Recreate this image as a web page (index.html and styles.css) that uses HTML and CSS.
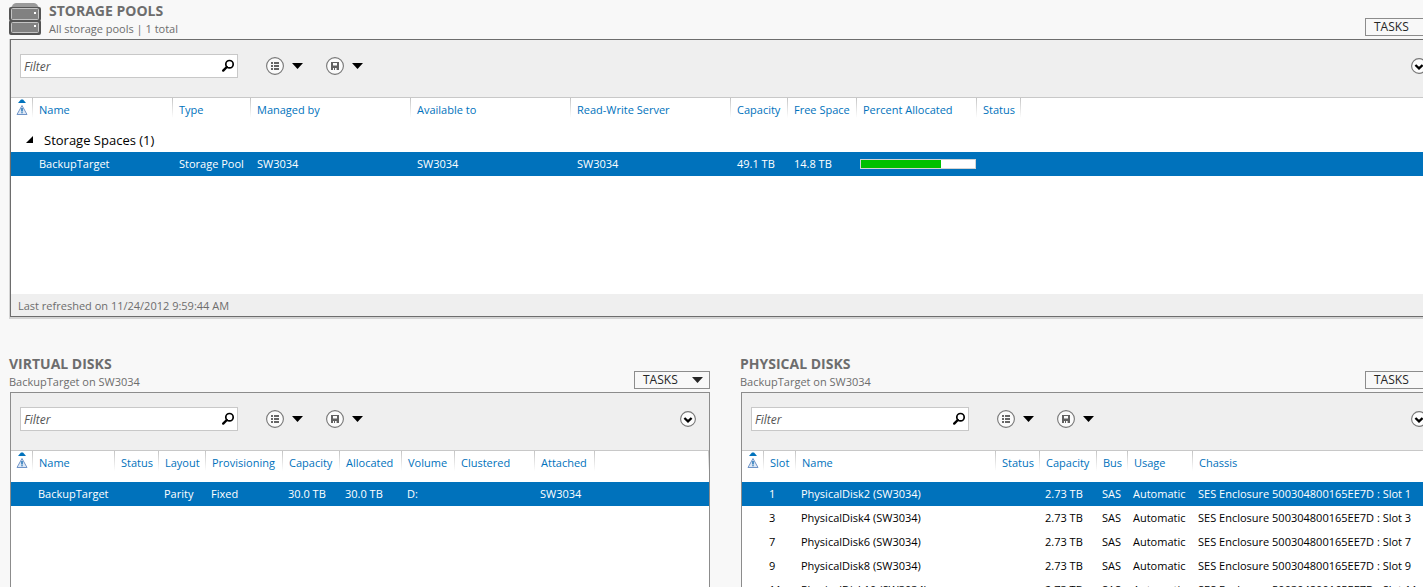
FILE: index.html
```html
<!DOCTYPE html>
<html lang="en">
<head>
  <meta charset="UTF-8" />
  <meta name="viewport" content="width=device-width, initial-scale=1.0"/>
  <title>Storage Pools</title>
  <link rel="stylesheet" href="styles.css">
</head>
<body>
  <!-- Shared icons -->
  <svg class="sprite" aria-hidden="true">
    <symbol id="i-search" viewBox="0 0 14 14">
      <circle cx="8.5" cy="5.2" r="3.7" fill="#fff" stroke="#000" stroke-width="1.7"/>
      <path d="M5.8 8L2.2 11.6" stroke="#000" stroke-width="2.4" stroke-linecap="round"/>
    </symbol>
    <symbol id="i-list" viewBox="0 0 18 18">
      <circle cx="9" cy="9" r="8.4" fill="#fbfbfb" stroke="#777" stroke-width="1.1"/>
      <path d="M5 6h2M5 9h2M5 12h2M8 6h5M8 9h5M8 12h5" stroke="#666" stroke-width="2"/>
    </symbol>
    <symbol id="i-save" viewBox="0 0 18 18">
      <circle cx="9" cy="9" r="8.4" fill="#fbfbfb" stroke="#777" stroke-width="1.1"/>
      <path d="M5 5h8v8H5z" fill="#606060"/>
      <path d="M7 6h4v2.4H7zM7 11h1v2H7zM9 11h1.6v2H9z" fill="#fbfbfb"/>
    </symbol>
    <symbol id="i-caret" viewBox="0 0 11 6">
      <path d="M0 0h11L5.5 6z" fill="currentColor"/>
    </symbol>
    <symbol id="i-chevron" viewBox="0 0 16 16">
      <circle cx="8" cy="8" r="7.4" fill="#fdfdfd" stroke="#777" stroke-width="1.1"/>
      <path d="M4.4 7L8 10.4L11.6 7" fill="none" stroke="#000" stroke-width="2.3"/>
    </symbol>
    <symbol id="i-warn" viewBox="0 0 12 18">
      <path d="M2 5L5 1.5h2L10 5z" fill="#0072bc"/>
      <path d="M6 7.5L11 16.5H1z" fill="#dfe8f5" stroke="#6f94c8" stroke-width="1"/>
      <path d="M6 10v3.5M6 14.3v1" stroke="#0061ad" stroke-width="1.3"/>
    </symbol>
  </svg>

  <main class="page">
    <section class="pools">
      <header class="head">
        <svg class="logo" viewBox="0 0 32 33" aria-hidden="true">
          <path d="M1 6L4 1.5Q5 0 7 0H25Q27 0 28 1.5L31 6z" fill="#9a9a9a"/>
          <rect x="0" y="4" width="32" height="14" rx="2" fill="#555"/>
          <rect x="0" y="17" width="32" height="15" rx="2" fill="#555"/>
          <rect x="2.5" y="5.5" width="27" height="11" rx="1" fill="#818181" stroke="#c4c4c4"/>
          <rect x="2.5" y="19.5" width="27" height="10" rx="1" fill="#818181" stroke="#c4c4c4"/>
          <rect x="25" y="9" width="2" height="2" fill="#fff"/>
          <rect x="25" y="22" width="2" height="2" fill="#fff"/>
        </svg>
        <div class="titles">
          <h2>STORAGE POOLS</h2>
          <p>All storage pools | 1 total</p>
        </div>
        <button class="tasks">TASKS <svg class="caret"><use href="#i-caret"/></svg></button>
      </header>
      <div class="panel panel-main">
        <div class="toolbar">
          <div class="filter">
            <input type="text" placeholder="Filter" aria-label="Filter storage pools">
            <button aria-label="Search"><svg class="search"><use href="#i-search"/></svg></button>
          </div>
          <button class="tool" aria-label="Queries"><svg class="round"><use href="#i-list"/></svg><svg class="caret"><use href="#i-caret"/></svg></button>
          <button class="tool" aria-label="Save query"><svg class="round"><use href="#i-save"/></svg><svg class="caret"><use href="#i-caret"/></svg></button>
          <button class="expand" aria-label="Expand"><svg><use href="#i-chevron"/></svg></button>
        </div>
        <div class="list">
          <table>
            <colgroup>
              <col class="w22"><col class="w140"><col class="w78"><col class="w160"><col class="w160"><col class="w160"><col class="w57"><col class="w69"><col class="w120"><col class="w44"><col>
            </colgroup>
            <thead>
              <tr>
                <th class="warn"><svg><use href="#i-warn"/></svg></th>
                <th>Name</th><th>Type</th><th>Managed by</th><th>Available to</th><th>Read-Write Server</th><th>Capacity</th><th>Free Space</th><th>Percent Allocated</th><th>Status</th><th class="rest"></th>
              </tr>
            </thead>
            <tbody>
              <tr class="group">
                <td colspan="11"><button><svg viewBox="0 0 7 7"><path d="M7 0v7H0z"/></svg>Storage Spaces (1)</button></td>
              </tr>
              <tr class="selected">
                <td></td><td>BackupTarget</td><td>Storage Pool</td><td>SW3034</td><td>SW3034</td><td>SW3034</td><td>49.1 TB</td><td>14.8 TB</td>
                <td class="meter"><div class="bar"><div class="fill" style="width: 70%"></div></div></td>
                <td></td><td></td>
              </tr>
            </tbody>
          </table>
        </div>
        <footer>Last refreshed on 11/24/2012 9:59:44 AM</footer>
      </div>
    </section>

    <div class="columns">
      <section>
        <header class="head">
          <div class="titles">
            <h2>VIRTUAL DISKS</h2>
            <p>BackupTarget on SW3034</p>
          </div>
          <button class="tasks">TASKS <svg class="caret"><use href="#i-caret"/></svg></button>
        </header>
        <div class="panel">
          <div class="toolbar">
            <div class="filter">
              <input type="text" placeholder="Filter" aria-label="Filter virtual disks">
              <button aria-label="Search"><svg class="search"><use href="#i-search"/></svg></button>
            </div>
            <button class="tool" aria-label="Queries"><svg class="round"><use href="#i-list"/></svg><svg class="caret"><use href="#i-caret"/></svg></button>
            <button class="tool" aria-label="Save query"><svg class="round"><use href="#i-save"/></svg><svg class="caret"><use href="#i-caret"/></svg></button>
            <button class="expand" aria-label="Expand"><svg><use href="#i-chevron"/></svg></button>
          </div>
          <table class="disks">
            <colgroup>
              <col class="w22"><col class="w82"><col class="w44"><col class="w47"><col class="w77"><col class="w57"><col class="w62"><col class="w53"><col class="w80"><col class="w60"><col>
            </colgroup>
            <thead>
              <tr>
                <th class="warn"><svg><use href="#i-warn"/></svg></th>
                <th>Name</th><th>Status</th><th>Layout</th><th>Provisioning</th><th>Capacity</th><th>Allocated</th><th>Volume</th><th>Clustered</th><th>Attached</th><th></th>
              </tr>
            </thead>
            <tbody>
              <tr class="selected">
                <td></td><td>BackupTarget</td><td></td><td>Parity</td><td>Fixed</td><td>30.0 TB</td><td>30.0 TB</td><td>D:</td><td></td><td>SW3034</td><td></td>
              </tr>
            </tbody>
          </table>
        </div>
      </section>

      <section>
        <header class="head">
          <div class="titles">
            <h2>PHYSICAL DISKS</h2>
            <p>BackupTarget on SW3034</p>
          </div>
          <button class="tasks">TASKS <svg class="caret"><use href="#i-caret"/></svg></button>
        </header>
        <div class="panel">
          <div class="toolbar">
            <div class="filter">
              <input type="text" placeholder="Filter" aria-label="Filter physical disks">
              <button aria-label="Search"><svg class="search"><use href="#i-search"/></svg></button>
            </div>
            <button class="tool" aria-label="Queries"><svg class="round"><use href="#i-list"/></svg><svg class="caret"><use href="#i-caret"/></svg></button>
            <button class="tool" aria-label="Save query"><svg class="round"><use href="#i-save"/></svg><svg class="caret"><use href="#i-caret"/></svg></button>
            <button class="expand" aria-label="Expand"><svg><use href="#i-chevron"/></svg></button>
          </div>
          <table class="disks">
            <colgroup>
              <col class="w22"><col class="w32"><col class="w200"><col class="w44"><col class="w57"><col class="w31"><col class="w65"><col>
            </colgroup>
            <thead>
              <tr>
                <th class="warn"><svg><use href="#i-warn"/></svg></th>
                <th>Slot</th><th>Name</th><th>Status</th><th>Capacity</th><th>Bus</th><th>Usage</th><th>Chassis</th>
              </tr>
            </thead>
            <tbody>
              <tr class="selected"><td></td><td>1</td><td>PhysicalDisk2 (SW3034)</td><td></td><td>2.73 TB</td><td>SAS</td><td>Automatic</td><td>SES Enclosure 500304800165EE7D : Slot 1</td></tr>
              <tr><td></td><td>3</td><td>PhysicalDisk4 (SW3034)</td><td></td><td>2.73 TB</td><td>SAS</td><td>Automatic</td><td>SES Enclosure 500304800165EE7D : Slot 3</td></tr>
              <tr><td></td><td>7</td><td>PhysicalDisk6 (SW3034)</td><td></td><td>2.73 TB</td><td>SAS</td><td>Automatic</td><td>SES Enclosure 500304800165EE7D : Slot 7</td></tr>
              <tr><td></td><td>9</td><td>PhysicalDisk8 (SW3034)</td><td></td><td>2.73 TB</td><td>SAS</td><td>Automatic</td><td>SES Enclosure 500304800165EE7D : Slot 9</td></tr>
              <tr><td></td><td>11</td><td>PhysicalDisk10 (SW3034)</td><td></td><td>2.73 TB</td><td>SAS</td><td>Automatic</td><td>SES Enclosure 500304800165EE7D : Slot 11</td></tr>
            </tbody>
          </table>
        </div>
      </section>
    </div>
  </main>
</body>
</html>
```
FILE: styles.css
```css
* {
  margin: 0;
  padding: 0;
  box-sizing: border-box;
}

body {
  height: 100vh;
  overflow: hidden;
  background: #f8f8f8;
  color: #000;
  font-family: 'Open Sans', sans-serif;
  font-size: 11px;
  line-height: 18px;
}

svg {
  display: block;
  flex: none;
}

button, input {
  font: inherit;
  color: inherit;
  background: none;
  border: none;
}

.sprite {
  width: 0;
  height: 0;
  position: absolute;
}

/* the page is a little wider than the window */
.page {
  display: flex;
  flex-direction: column;
  gap: 38px;
  height: 100vh;
  margin-left: 9px;
  margin-right: -18px;
  padding-top: 3px;
}

.columns {
  flex: 1;
  display: grid;
  grid-template-columns: minmax(0, 1fr) minmax(0, 1fr);
  gap: 30px;
  min-height: 0;
}

.columns section {
  display: flex;
  flex-direction: column;
  min-height: 0;
}

.columns .panel {
  flex: 1;
  min-height: 0;
  overflow: hidden;
  border-bottom: none;
}

/* Section heading */
.head {
  display: flex;
  gap: 8px;
  height: 36px;
  color: #6d6d6d;
}

.logo {
  width: 32px;
  height: 33px;
}

.titles {
  flex: 1;
}

h2 {
  padding-bottom: 2px;
  font-size: 14px;
  line-height: 15px;
}

.tasks {
  display: flex;
  align-items: center;
  justify-content: space-between;
  align-self: flex-end;
  width: 76px;
  height: 18px;
  margin-bottom: 3px;
  padding: 0 6px 0 8px;
  border: 1px solid #8c8c8c;
  color: #262626;
  font-size: 12px;
}

.caret {
  width: 11px;
  height: 6px;
}

/* Panel */
.panel {
  margin-left: 1px;
  background: #fff;
  border: 1px solid #8c8c8c;
}

.panel-main {
  margin-bottom: 1px;
  border-color: #6d6d6d;
  box-shadow: 0 1px 0 1px #d4d4d4;
}

.toolbar {
  display: flex;
  align-items: center;
  height: 58px;
  padding: 0 13px 5px 9px;
  background: #efefef;
  border-bottom: 1px solid #c8c8c8;
}

.filter {
  display: flex;
  align-items: center;
  width: 218px;
  height: 24px;
  background: #fff;
  border: 1px solid #c8c8c8;
}

.filter input {
  flex: 1;
  min-width: 0;
  padding: 1px 0 0 3px;
  font-size: 12px;
  outline: none;
}

.filter input::placeholder {
  color: #555;
  font-style: italic;
  opacity: 1;
}

.search {
  width: 14px;
  height: 14px;
  margin-right: 2px;
}

.tool {
  display: flex;
  align-items: center;
  gap: 8px;
  margin-left: 28px;
}

.tool + .tool {
  margin-left: 23px;
}

.round {
  width: 18px;
  height: 18px;
}

.expand {
  margin-left: auto;
}

.expand svg {
  width: 16px;
  height: 16px;
}

/* Tables */
.list {
  height: 196px;
}

table {
  width: 100%;
  table-layout: fixed;
  border-collapse: collapse;
}

th, td {
  text-align: left;
  white-space: nowrap;
}

th {
  height: 31px;
  padding: 3px 0 0 6px;
  vertical-align: top;
  font-weight: normal;
  color: #0072bc;
  background: linear-gradient(#c4c4c4, #fff) no-repeat right top / 1px 20px;
}

th.rest {
  background: none;
}

th.warn {
  padding: 0 0 0 5px;
}

th.warn svg {
  width: 12px;
  height: 18px;
}

td {
  height: 24px;
  padding-left: 6px;
}

.disks td {
  padding-left: 5px;
}

.selected {
  background: #0072bc;
  color: #fff;
}

.group td {
  height: 23px;
  padding: 0 0 2px 15px;
}

.group button {
  display: flex;
  align-items: center;
  gap: 11px;
  font-size: 13px;
}

.group svg {
  width: 7px;
  height: 7px;
}

td.meter {
  padding: 0 1px 0 3px;
}

.bar {
  height: 10px;
  background: #fff;
  border: 1px solid #d4d4d4;
}

.fill {
  height: 100%;
  background: #00c000;
}

footer {
  height: 22px;
  padding: 3px 7px 0;
  background: #efefef;
  color: #6d6d6d;
}

/* Column widths */
.w22 { width: 22px; }
.w31 { width: 31px; }
.w32 { width: 32px; }
.w44 { width: 44px; }
.w47 { width: 47px; }
.w53 { width: 53px; }
.w57 { width: 57px; }
.w60 { width: 60px; }
.w62 { width: 62px; }
.w65 { width: 65px; }
.w69 { width: 69px; }
.w77 { width: 77px; }
.w78 { width: 78px; }
.w80 { width: 80px; }
.w82 { width: 82px; }
.w120 { width: 120px; }
.w140 { width: 140px; }
.w160 { width: 160px; }
.w200 { width: 200px; }
```
